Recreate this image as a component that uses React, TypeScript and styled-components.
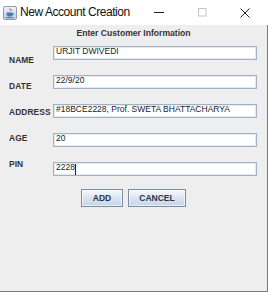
import { FC } from "react";
import styled, { createGlobalStyle } from "styled-components";

const GlobalStyle = createGlobalStyle`
  html, body {
    margin: 0;
    padding: 0;
    background: #ffffff;
  }
  * {
    box-sizing: border-box;
  }
`;

const Window = styled.div`
  width: 268px;
  height: 292px;
  display: flex;
  flex-direction: column;
  font-family: "Liberation Sans", Arial, sans-serif;
`;

const TitleBar = styled.div`
  height: 25px;
  background: #ffffff;
  display: flex;
  align-items: center;
  padding-left: 3px;
`;

const TitleText = styled.span`
  margin-left: 3px;
  font-size: 12px;
  letter-spacing: -0.45px;
  color: #111111;
  line-height: 14px;
  margin-top: -1px;
`;

const Controls = styled.div`
  margin-left: auto;
  display: flex;
  align-items: center;
`;

const ControlButton = styled.div<{ $width: number }>`
  width: ${({ $width }) => $width}px;
  height: 25px;
  display: flex;
  align-items: center;
  justify-content: center;
`;

const Body = styled.div`
  flex: 1;
  background: #eeeeee;
  border-right: 1px solid #7c7c7c;
  border-bottom: 1px solid #7c7c7c;
  display: flex;
  flex-direction: column;
  padding-top: 3px;
`;

const Heading = styled.div`
  text-align: center;
  font-size: 8.6px;
  font-weight: bold;
  line-height: 11px;
  color: #333333;
  margin-bottom: 7px;
`;

const Form = styled.div`
  display: flex;
  flex-direction: column;
  gap: 15px;
`;

const Row = styled.div`
  display: flex;
  align-items: flex-start;
  height: 14px;
  padding-left: 9px;
`;

const Label = styled.div<{ $shift: number }>`
  width: 44px;
  margin-top: ${({ $shift }) => $shift}px;
  font-size: 8.4px;
  font-weight: bold;
  line-height: 11px;
  color: #333333;
  letter-spacing: 0.1px;
  white-space: nowrap;
`;

const Field = styled.div`
  width: 204px;
  height: 14px;
  background: #ffffff;
  border: 1px solid #a2b1c6;
  box-shadow: inset 0 0 0 1px #e4e9f0;
  padding: 0 2px;
  font-size: 8.5px;
  line-height: 9px;
  color: #222222;
  white-space: nowrap;
  overflow: hidden;
  display: flex;
  align-items: flex-start;
`;

const Caret = styled.span`
  display: inline-block;
  width: 1px;
  height: 11px;
  margin-top: 1px;
  margin-left: 0.5px;
  background: #222222;
`;

const Buttons = styled.div`
  display: flex;
  justify-content: center;
  gap: 5px;
  margin-top: 13px;
`;

const Button = styled.button<{ $width: number }>`
  width: ${({ $width }) => $width}px;
  height: 18px;
  padding: 0;
  border: 1px solid #7b8ca3;
  background: linear-gradient(#f6f9fc, #dbe6f2 45%, #c4d6ea);
  box-shadow: inset 0 0 0 1px rgba(255, 255, 255, 0.6);
  font-family: "Liberation Sans", Arial, sans-serif;
  font-size: 8.5px;
  font-weight: bold;
  color: #2c3344;
  cursor: pointer;
`;

const JavaIcon: FC = () => (
  <svg width="14" height="14" viewBox="0 0 14 14">
    <defs>
      <linearGradient id="jbg" x1="0" y1="0" x2="0" y2="1">
        <stop offset="0" stopColor="#f2f5fa" />
        <stop offset="1" stopColor="#b8c8dc" />
      </linearGradient>
    </defs>
    <rect x="0.5" y="0.5" width="13" height="13" rx="1.5" fill="url(#jbg)" stroke="#8c9db4" />
    <path d="M7 2.2c-1 1 .9 1.6 0 2.8M8.6 3c-.6.7.6 1.1 0 1.9" stroke="#e0562a" strokeWidth="0.9" fill="none" />
    <path d="M3.6 6.6h6.2v1.6c0 1.6-1.4 2.4-3.1 2.4s-3.1-.8-3.1-2.4z" fill="#4e78b0" />
    <path d="M9.8 7.2c1.3 0 1.3 1.6-.3 1.8" stroke="#4e78b0" strokeWidth="0.8" fill="none" />
    <rect x="3" y="11.2" width="7.6" height="1" fill="#4e78b0" />
  </svg>
);

const rows = [
  { label: "NAME", value: "URJIT DWIVEDI", shift: 8.5 },
  { label: "DATE", value: "22/9/20", shift: 5.5 },
  { label: "ADDRESS", value: "#18BCE2228, Prof. SWETA BHATTACHARYA", shift: 3 },
  { label: "AGE", value: "20", shift: -0.5 },
  { label: "PIN", value: "2228", shift: -3.5 },
];

const App: FC = () => {
  return (
    <>
      <GlobalStyle />
      <Window>
        <TitleBar>
          <JavaIcon />
          <TitleText>New Account Creation</TitleText>
          <Controls>
            <ControlButton $width={46}>
              <svg width="11" height="11" viewBox="0 0 11 11">
                <line x1="0" y1="5.5" x2="10" y2="5.5" stroke="#222" strokeWidth="1" />
              </svg>
            </ControlButton>
            <ControlButton $width={40}>
              <svg width="9" height="9" viewBox="0 0 9 9">
                <rect x="0.5" y="0.5" width="7.5" height="7.5" fill="none" stroke="#c6c6c6" strokeWidth="1" />
              </svg>
            </ControlButton>
            <ControlButton $width={46}>
              <svg width="10" height="10" viewBox="0 0 10 10">
                <path d="M0.5 0.5L9.5 9.5M9.5 0.5L0.5 9.5" stroke="#222" strokeWidth="1" />
              </svg>
            </ControlButton>
          </Controls>
        </TitleBar>
        <Body>
          <Heading>Enter Customer Information</Heading>
          <Form>
            {rows.map((row) => (
              <Row key={row.label}>
                <Label $shift={row.shift}>{row.label}</Label>
                <Field>
                  {row.value}
                  {row.label === "PIN" && <Caret />}
                </Field>
              </Row>
            ))}
          </Form>
          <Buttons>
            <Button $width={42}>ADD</Button>
            <Button $width={58}>CANCEL</Button>
          </Buttons>
        </Body>
      </Window>
    </>
  );
};

export default App;
